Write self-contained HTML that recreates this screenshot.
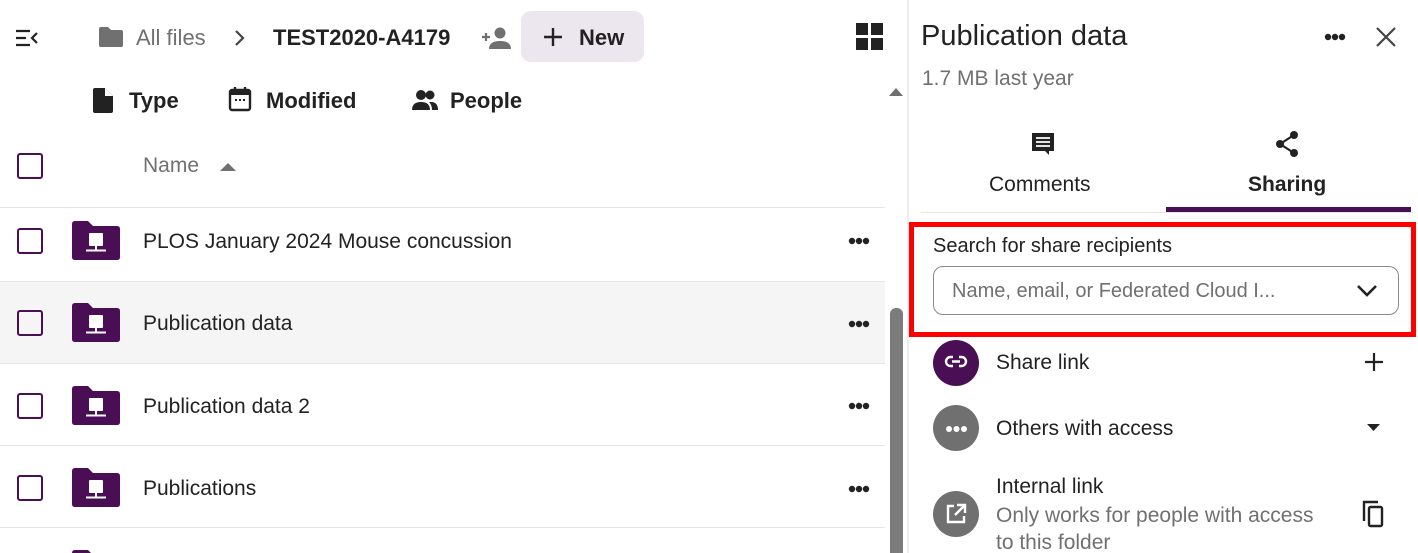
<!DOCTYPE html>
<html><head><meta charset="utf-8"><style>
*{margin:0;padding:0;box-sizing:border-box}
html,body{width:1418px;height:553px;overflow:hidden}
body{background:#fff;font-family:"Liberation Sans",sans-serif;color:#222;position:relative}
.a{position:absolute}
.cb{position:absolute;left:17px;width:26px;height:26px;border:2.5px solid #4a0e54;border-radius:3px}
.row{position:absolute;left:0;width:885px;height:82px;border-bottom:1px solid #e6e6e6}
.row .t{position:absolute;left:143px;font-size:21px;color:#222}
.dots{position:absolute;left:848px}
.fold{position:absolute;left:72px;width:48px;height:40px}
</style></head><body>
<svg class="a" style="left:15px;top:28px" width="24" height="20" viewBox="0 0 24 20"><path d="M1 3h14M1 10h10M1 17h14" stroke="#222" stroke-width="2.2"/><path d="M22 5l-5 5 5 5" stroke="#222" stroke-width="2.2" fill="none"/></svg>
<svg class="a" style="left:97px;top:25px" width="28" height="24" viewBox="0 0 28 24"><path d="M2 4q0-2 2-2h7l3 3h10q2 0 2 2v13q0 2-2 2H4q-2 0-2-2z" fill="#707070"/></svg>
<div class="a" style="left:136px;top:25px;font-size:22px;color:#707070">All files</div>
<svg class="a" style="left:232px;top:28px" width="14" height="20"><path d="M4 3l7 7-7 7" stroke="#444" stroke-width="2.2" fill="none"/></svg>
<div class="a" style="left:273px;top:25px;font-size:22px;font-weight:bold;color:#222">TEST2020-A4179</div>
<svg class="a" style="left:481px;top:26px" width="32" height="24" viewBox="0 0 32 24"><path d="M1 11h8M5 7v8" stroke="#707070" stroke-width="2.2"/><circle cx="19" cy="7" r="5.5" fill="#707070"/><path d="M8 23q0-8 11-8t11 8z" fill="#707070"/></svg>
<div class="a" style="left:521px;top:11px;width:123px;height:51px;background:#ece6ee;border-radius:10px"></div>
<svg class="a" style="left:543px;top:27px" width="20" height="20"><path d="M10 1v18M1 10h18" stroke="#222" stroke-width="2.4"/></svg>
<div class="a" style="left:579px;top:25px;font-size:22px;font-weight:bold;color:#222">New</div>
<svg class="a" style="left:855px;top:22px" width="30" height="30"><rect x="1" y="1" width="12" height="12" fill="#222"/><rect x="16" y="1" width="12" height="12" fill="#222"/><rect x="1" y="16" width="12" height="12" fill="#222"/><rect x="16" y="16" width="12" height="12" fill="#222"/></svg>
<svg class="a" style="left:92px;top:87px" width="22" height="27" viewBox="0 0 22 27"><path d="M3 1h10l8 8v15q0 2-2 2H3q-2 0-2-2V3q0-2 2-2z" fill="#222"/><path d="M13 1v8h8" fill="#fff"/></svg>
<div class="a" style="left:129px;top:88px;font-size:22px;font-weight:bold">Type</div>
<svg class="a" style="left:228px;top:86px" width="24" height="26" viewBox="0 0 24 26"><rect x="2" y="4" width="20" height="20" rx="2" fill="none" stroke="#222" stroke-width="2.4"/><rect x="2" y="4" width="20" height="5" fill="#222"/><path d="M7 1v5M17 1v5" stroke="#222" stroke-width="2.4"/><path d="M7 14h2M11 14h2M15 14h2" stroke="#222" stroke-width="2"/></svg>
<div class="a" style="left:266px;top:88px;font-size:22px;font-weight:bold">Modified</div>
<svg class="a" style="left:411px;top:89px" width="28" height="22" viewBox="0 0 28 22"><circle cx="10" cy="6" r="5" fill="#222"/><circle cx="19" cy="6" r="4.5" fill="#222"/><path d="M1 21q0-8 9-8t9 8z" fill="#222"/><path d="M20 13q7 0 7 8h-6q0-5-3-8z" fill="#222"/></svg>
<div class="a" style="left:450px;top:88px;font-size:22px;font-weight:bold">People</div>
<div class="row" style="top:126px;height:82px"></div>
<div class="cb" style="top:153px"></div>
<div class="a" style="left:143px;top:154px;font-size:21px;color:#707070">Name</div>
<svg class="a" style="left:219px;top:161px" width="18" height="12"><path d="M1 10l8-8 8 8z" fill="#707070"/></svg>
<svg width="0" height="0" style="position:absolute"><defs>
<g id="f"><path d="M3 0h13l5 5h24q3 0 3 3v28q0 3-3 3H3q-3 0-3-3V3q0-3 3-3z" fill="#4a0e54"/><rect x="17" y="12" width="14" height="13" rx="1" fill="#fff"/><path d="M24 25v4M14 29.5h20" stroke="#fff" stroke-width="2"/></g>
<g id="d"><circle cx="4" cy="4" r="3.2" fill="#222"/><circle cx="11" cy="4" r="3.2" fill="#222"/><circle cx="18" cy="4" r="3.2" fill="#222"/></g>
</defs></svg>
<div class="row" style="top:207px;height:75px"><div class="t" style="top:23px">PLOS January 2024 Mouse concussion</div><svg class="dots" style="top:30px" width="22" height="8"><use href="#d"/></svg></div>
<div class="row" style="top:282px;background:#f5f5f5"><div class="t" style="top:30px">Publication data</div><svg class="dots" style="top:38px" width="22" height="8"><use href="#d"/></svg></div>
<div class="row" style="top:364px"><div class="t" style="top:31px">Publication data 2</div><svg class="dots" style="top:38px" width="22" height="8"><use href="#d"/></svg></div>
<div class="row" style="top:446px"><div class="t" style="top:31px">Publications</div><svg class="dots" style="top:39px" width="22" height="8"><use href="#d"/></svg></div>
<div class="cb" style="top:228px"></div><div class="cb" style="top:310px"></div><div class="cb" style="top:393px"></div><div class="cb" style="top:475px"></div>
<svg class="fold" style="top:221px"><use href="#f"/></svg>
<svg class="fold" style="top:303px"><use href="#f"/></svg>
<svg class="fold" style="top:386px"><use href="#f"/></svg>
<svg class="fold" style="top:468px"><use href="#f"/></svg>
<svg class="fold" style="top:550px;height:3px"><use href="#f"/></svg>
<svg class="a" style="left:888px;top:85px" width="16" height="12"><path d="M1 11l7-8 7 8z" fill="#707070"/></svg>
<div class="a" style="left:890px;top:308px;width:13px;height:245px;background:#7c7c7c;border-radius:6px 6px 0 0"></div>
<div class="a" style="left:907px;top:0;width:2px;height:553px;background:#ededed"></div>
<div class="a" style="left:1395px;top:-20px;width:40px;height:40px;border:3px solid #4a0e54;border-radius:50%;border-left-color:transparent;border-bottom-color:transparent"></div>
<div class="a" style="left:921px;top:20px;font-size:29px;color:#222">Publication data</div>
<div class="a" style="left:922px;top:67px;font-size:21px;color:#707070">1.7 MB last year</div>
<svg class="a" style="left:1324px;top:33px" width="22" height="8"><use href="#d"/></svg>
<svg class="a" style="left:1375px;top:26px" width="22" height="22"><path d="M2 2l18 18M20 2L2 20" stroke="#444" stroke-width="2.2"/></svg>
<svg class="a" style="left:1030px;top:131px" width="26" height="26" viewBox="0 0 26 26"><path d="M2 2h22v18h-5v4l-4-4H2z" fill="#222"/><path d="M6 7h14M6 11h14M6 15h14" stroke="#fff" stroke-width="1.8"/></svg>
<div class="a" style="left:989px;top:173px;font-size:21px;color:#222">Comments</div>
<svg class="a" style="left:1275px;top:130px" width="26" height="28" viewBox="0 0 26 28"><circle cx="19" cy="5" r="4" fill="#222"/><circle cx="5" cy="14" r="4" fill="#222"/><circle cx="19" cy="23" r="4" fill="#222"/><path d="M19 5L5 14l14 9" stroke="#222" stroke-width="2.2" fill="none"/></svg>
<div class="a" style="left:1248px;top:173px;font-size:21px;font-weight:bold;color:#222">Sharing</div>
<div class="a" style="left:921px;top:212px;width:492px;height:1px;background:#e6e6e6"></div>
<div class="a" style="left:1166px;top:207px;width:245px;height:5px;background:#4a0e54"></div>
<div class="a" style="left:909px;top:222px;width:507px;height:115px;border:5px solid #f00"></div>
<div class="a" style="left:933px;top:235px;font-size:20px;color:#222">Search for share recipients</div>
<div class="a" style="left:933px;top:266px;width:466px;height:49px;border:1.5px solid #8a8a8a;border-radius:10px"></div>
<div class="a" style="left:952px;top:280px;font-size:20px;color:#707070">Name, email, or Federated Cloud I...</div>
<svg class="a" style="left:1356px;top:284px" width="22" height="14"><path d="M2 2l9 9 9-9" stroke="#222" stroke-width="2.6" fill="none"/></svg>
<div class="a" style="left:933px;top:340px;width:46px;height:46px;border-radius:50%;background:#4a0e54"></div>
<svg class="a" style="left:944px;top:353px" width="24" height="20"><path d="M9 4H6.5a4.5 4.5 0 0 0 0 9H9M15 4h2.5a4.5 4.5 0 0 1 0 9H15M8 8.5h8" stroke="#fff" stroke-width="2.4" fill="none"/></svg>
<div class="a" style="left:996px;top:351px;font-size:21px">Share link</div>
<svg class="a" style="left:1364px;top:352px" width="20" height="20"><path d="M10 1v18M1 10h18" stroke="#222" stroke-width="2.2"/></svg>
<div class="a" style="left:933px;top:405px;width:46px;height:46px;border-radius:50%;background:#707070"></div>
<svg class="a" style="left:945px;top:425px" width="24" height="8"><circle cx="4" cy="4" r="3" fill="#fff"/><circle cx="11.5" cy="4" r="3" fill="#fff"/><circle cx="19" cy="4" r="3" fill="#fff"/></svg>
<div class="a" style="left:996px;top:417px;font-size:21px">Others with access</div>
<svg class="a" style="left:1366px;top:423px" width="16" height="10"><path d="M1 1h13l-6.5 7z" fill="#222"/></svg>
<div class="a" style="left:933px;top:491px;width:46px;height:46px;border-radius:50%;background:#707070"></div>
<svg class="a" style="left:945px;top:503px" width="22" height="22"><path d="M9 3H3v16h16v-6" stroke="#fff" stroke-width="2.4" fill="none"/><path d="M12 2h8v8M20 2L10 12" stroke="#fff" stroke-width="2.4" fill="none"/></svg>
<div class="a" style="left:996px;top:475px;font-size:21px">Internal link</div>
<div class="a" style="left:996px;top:502px;width:400px;height:51px;overflow:hidden;font-size:21px;color:#707070;line-height:27px">Only works for people with access<br>to this folder</div>
<svg class="a" style="left:1360px;top:499px" width="28" height="30"><path d="M4 22V3h14" stroke="#222" stroke-width="2.4" fill="none"/><rect x="9" y="8" width="13" height="19" rx="1.5" stroke="#222" stroke-width="2.4" fill="none"/></svg>
</body></html>
